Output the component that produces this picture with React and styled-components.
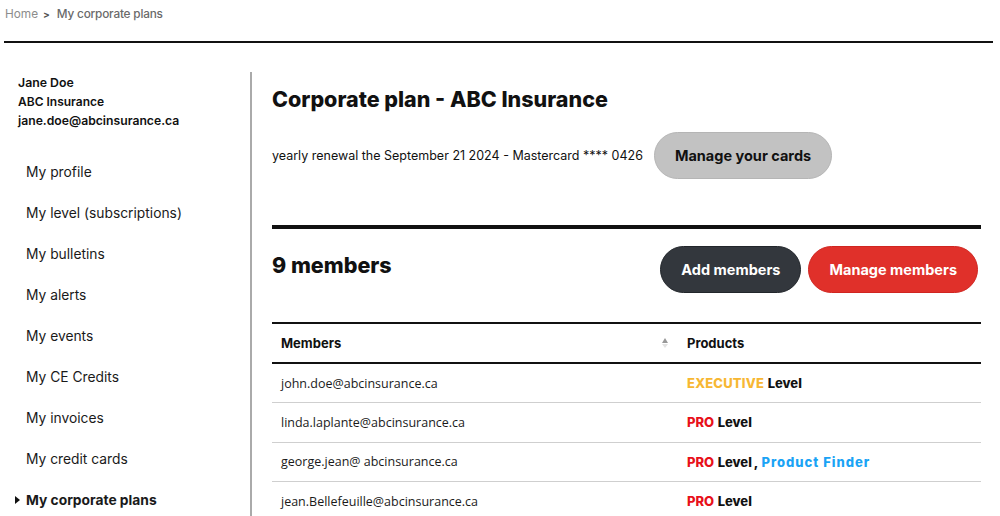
import React from "react";
import styled, { createGlobalStyle } from "styled-components";

const Global = createGlobalStyle`
  html, body { margin: 0; padding: 0; background: #fff; }
  body { font-family: Inter, "Liberation Sans", sans-serif; color: #111; overflow: hidden; }
  * { box-sizing: border-box; }
`;

const Page = styled.div`
  width: 1000px;
  height: 516px;
  overflow: hidden;
  padding: 0 7px 0 4px;
`;

const Breadcrumb = styled.div`
  height: 43px;
  border-bottom: 2px solid #111;
  padding: 7px 0 0 1px;
  font-size: 11.8px;
  display: flex;
  gap: 5px;
  align-items: flex-start;
`;

const Crumb = styled.span`
  color: ${(p) => (p.$current ? "#6a6a6a" : "#8c8c8c")};
  font-weight: ${(p) => (p.$current ? 500 : 400)};
  letter-spacing: ${(p) => (p.$current ? "-0.2px" : "0")};
`;

const Sep = styled.span`
  color: #555;
  font-weight: 700;
  font-size: 10px;
  margin: 1px 2px 0 0;
`;

const Body = styled.div`
  display: flex;
  padding-top: 29px;
`;

const Sidebar = styled.aside`
  width: 248px;
  flex-shrink: 0;
  border-right: 2px solid #aaa;
  padding: 0 0 40px 14px;
`;

const UserBlock = styled.div`
  display: flex;
  flex-direction: column;
  margin: 0 0 32px;
  padding-top: 1px;
`;

const UserLine = styled.div`
  font-size: ${(p) => p.$size || 12}px;
  font-weight: 600;
  line-height: 19px;
  color: #111;
`;

const Nav = styled.nav`
  display: flex;
  flex-direction: column;
  gap: 20px;
`;

const NavItem = styled.div`
  position: relative;
  padding-left: 8px;
  font-size: 13.8px;
  line-height: 21px;
  font-weight: ${(p) => (p.$active ? 700 : 400)};
  color: #1a1a1a;
  ${(p) =>
    p.$active &&
    `&::before {
      content: "";
      position: absolute;
      left: -3px;
      top: 6px;
      border-left: 5px solid #111;
      border-top: 4.5px solid transparent;
      border-bottom: 4.5px solid transparent;
    }`}
`;

const Main = styled.main`
  flex: 1;
  padding: 13px 0 0 20px;
`;

const Title = styled.h1`
  margin: 0;
  font-size: 21.5px;
  font-weight: 800;
  line-height: 28px;
  color: #111;
`;

const RenewalRow = styled.div`
  display: flex;
  align-items: center;
  gap: 11px;
  margin-top: 19px;
  font-size: 12.5px;
  color: #111;
`;

const Pill = styled.button`
  height: 47px;
  border-radius: 24px;
  border: 1px solid ${(p) => p.$border};
  background: ${(p) => p.$bg};
  color: ${(p) => p.$fg};
  font-family: inherit;
  font-size: 14.5px;
  font-weight: 700;
  padding: 0 20px;
  cursor: pointer;
`;

const Section = styled.section`
  margin-top: 46px;
  border-top: 4px solid #111;
  width: 709px;
`;

const MembersHeader = styled.div`
  display: flex;
  justify-content: space-between;
  align-items: flex-start;
  padding: 17px 3px 0 0;
  height: 93px;
`;

const SubTitle = styled.h2`
  margin: 6px 0 0;
  font-size: 21.5px;
  font-weight: 800;
  line-height: 26px;
`;

const Buttons = styled.div`
  display: flex;
  gap: 7px;
`;

const Table = styled.table`
  width: 100%;
  border-collapse: collapse;
  border-top: 2px solid #111;
`;

const Th = styled.th`
  text-align: left;
  font-size: 13px;
  font-weight: 700;
  height: 40px;
  padding: 0 0 0 9px;
  border-bottom: 2px solid #111;
  position: relative;
  width: ${(p) => p.$w || "auto"};
`;

const SortIcon = styled.span`
  position: absolute;
  right: 10px;
  top: 14px;
  display: flex;
  flex-direction: column;
  gap: 1px;
  &::before {
    content: "";
    border-left: 3.5px solid transparent;
    border-right: 3.5px solid transparent;
    border-bottom: 5px solid #999;
  }
  &::after {
    content: "";
    border-left: 3.5px solid transparent;
    border-right: 3.5px solid transparent;
    border-top: 4px solid #e2e2e2;
  }
`;

const Td = styled.td`
  height: 39.5px;
  padding: 0 0 0 9px;
  font-size: 12.5px;
  border-bottom: 1px solid #cfcfcf;
  font-family: ${(p) => (p.$email ? '"Open Sans", "Liberation Sans", sans-serif' : "inherit")};
  color: #1a1a1a;
`;

const Tag = styled.span`
  font-weight: 800;
  font-size: 13px;
  color: ${(p) => p.$color};
  letter-spacing: ${(p) => p.$ls || 0}px;
  margin-left: ${(p) => p.$ml || 0}px;
`;

const rows = [
  { email: "john.doe@abcinsurance.ca", tag: ["EXECUTIVE", "#f7b733", 0.2] },
  { email: "linda.laplante@abcinsurance.ca", tag: ["PRO", "#e8101a", 0] },
  { email: "george.jean@ abcinsurance.ca", tag: ["PRO", "#e8101a", 0], finder: true },
  { email: "jean.Bellefeuille@abcinsurance.ca", tag: ["PRO", "#e8101a", 0] },
];

const navItems = [
  "My profile",
  "My level (subscriptions)",
  "My bulletins",
  "My alerts",
  "My events",
  "My CE Credits",
  "My invoices",
  "My credit cards",
  "My corporate plans",
];

export default function App() {
  return (
    <Page>
      <Global />
      <Breadcrumb>
        <Crumb>Home</Crumb>
        <Sep>&gt;</Sep>
        <Crumb $current>My corporate plans</Crumb>
      </Breadcrumb>
      <Body>
        <Sidebar>
          <UserBlock>
            <UserLine $size={12.3}>Jane Doe</UserLine>
            <UserLine $size={12}>ABC Insurance</UserLine>
            <UserLine $size={12.2}>jane.doe@abcinsurance.ca</UserLine>
          </UserBlock>
          <Nav>
            {navItems.map((n, i) => (
              <NavItem key={n} $active={i === navItems.length - 1}>
                {n}
              </NavItem>
            ))}
          </Nav>
        </Sidebar>
        <Main>
          <Title>Corporate plan - ABC Insurance</Title>
          <RenewalRow>
            <span>yearly renewal the September 21 2024 - Mastercard **** 0426</span>
            <Pill $bg="#c2c2c2" $fg="#111" $border="#b5b5b5">
              Manage your cards
            </Pill>
          </RenewalRow>
          <Section>
            <MembersHeader>
              <SubTitle>9 members</SubTitle>
              <Buttons>
                <Pill $bg="#33373d" $fg="#fff" $border="#22262b">
                  Add members
                </Pill>
                <Pill $bg="#e0302a" $fg="#fff" $border="#d02520">
                  Manage members
                </Pill>
              </Buttons>
            </MembersHeader>
            <Table>
              <thead>
                <tr>
                  <Th $w="406px">
                    Members
                    <SortIcon />
                  </Th>
                  <Th>Products</Th>
                </tr>
              </thead>
              <tbody>
                {rows.map((r) => (
                  <tr key={r.email}>
                    <Td $email>{r.email}</Td>
                    <Td>
                      <Tag $color={r.tag[1]} $ls={r.tag[2]}>{r.tag[0]}</Tag>{" "}
                      <Tag $color="#111">Level</Tag>
                      {r.finder && (
                        <>
                          <Tag $color="#111" $ml={2}>,</Tag>
                          <Tag $color="#1aa3f5" $ls={1} $ml={3}>Product Finder</Tag>
                        </>
                      )}
                    </Td>
                  </tr>
                ))}
              </tbody>
            </Table>
          </Section>
        </Main>
      </Body>
    </Page>
  );
}
